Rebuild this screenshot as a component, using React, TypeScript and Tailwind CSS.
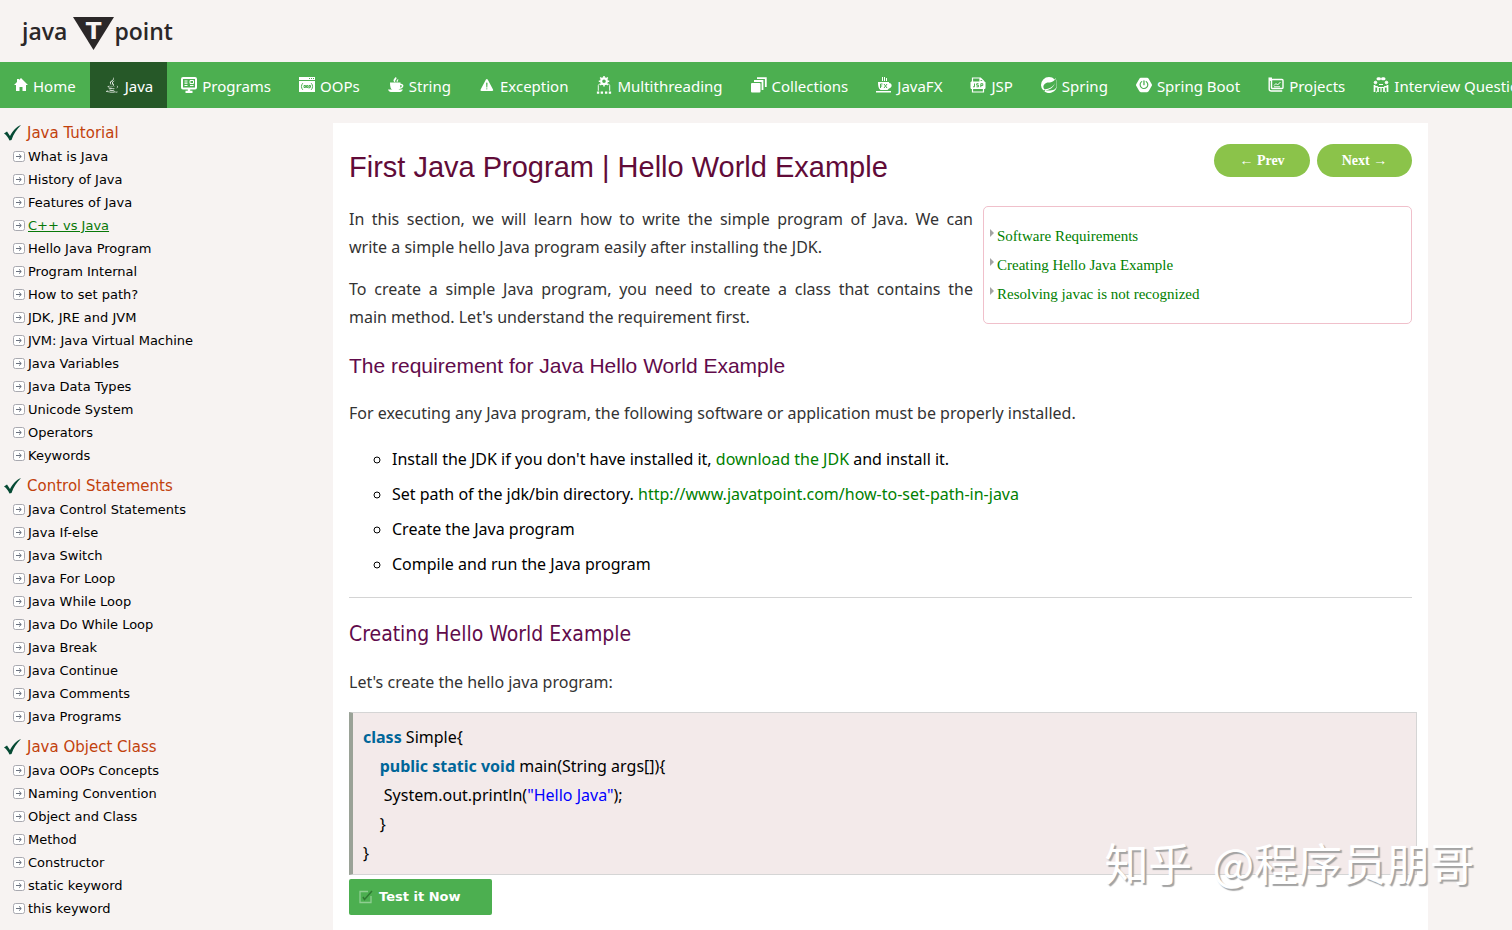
import type { ReactNode } from "react"
import { FaJava } from "react-icons/fa"
import { IoWarning } from "react-icons/io5"
import { SiSpring, SiSpringboot } from "react-icons/si"

const glyph = "h-4 w-4 shrink-0"

const HomeIcon = () => (
    <svg viewBox="0 0 14 14" className="h-3.5 w-3.5 shrink-0" fill="currentColor">
        <path d="M7 0l7 7h-2v6H8.5V9h-3v4H2V7H0l3-3V1h2v1z" />
    </svg>
)

const ProgramsIcon = () => (
    <svg viewBox="0 0 16 16" className={glyph} fill="none" stroke="currentColor">
        <rect x="1" y="1" width="14" height="10.5" rx="1" strokeWidth="2" />
        <path d="M3.5 4h3M3.5 6.2h3M3.5 8.5h3M9 8.5h3.5" strokeWidth="1.2" />
        <path d="M9 3.5h3.5v3H9z" />
        <path d="M8 12v2M4.5 15h7" strokeWidth="2.4" />
    </svg>
)

const OopsIcon = () => (
    <svg viewBox="0 0 16 16" className={glyph}>
        <path d="M0 0h16v3H0zM0 4h16v11H0z" fill="currentColor" />
        <path d="M10 1.5h1M12 1.5h1M14 1.5h1" stroke="#4caf50" />
        <path
            d="M3.8 6.2C2 8 2 11 3.8 12.8M12.2 6.2c1.8 1.8 1.8 4.8 0 6.6M5 8.5h1.6v2H5zM7.5 8.5h1.4v2H7.5zM10 11.5v-3h1.5v1.8H10"
            fill="none"
            stroke="#4caf50"
        />
    </svg>
)

const CupIcon = () => (
    <svg viewBox="0 0 16 16" className={glyph} fill="currentColor">
        <path d="M7.8 0c2.400 1.800-1.600 2.800-.4 5.400C4 4.200 5.800 2 7.800 0zM10 2c1.200 1-1.200 2 0 3.400-2.600-.8-1-2.400 0-3.400z" />
        <path d="M2 5.500h10.500v1.200c4-.5 4 5-1 5.300L10.500 13h-6C2.500 12 2 9.500 2 5.500zm10.400 2.400l-.3 2.600c2.200-.2 2-2.900.3-2.600z" />
        <path d="M0 12.500h15c-1.500 2.500-2.500 2.500-4 2.500H4c-1.500 0-3 0-4-2.500z" />
    </svg>
)

const ThreadIcon = () => (
    <svg viewBox="0 0 16 20" className="h-[19px] w-4 shrink-0" fill="none" stroke="currentColor">
        <circle cx="8" cy="5.5" r="3" strokeWidth="2.2" />
        <path d="M8 0v2M8 9v2M2.5 5.5h2M11.5 5.5h2M4 1.5L5.5 3M12 1.5L10.5 3M4 9.5L5.5 8M12 9.5L10.5 8" strokeWidth="1.6" />
        <path d="M3.5 8L2 10v5.5M12.5 8l1.5 2v5.5" />
        <path d="M.5 17.5H3M4.5 17.5H7M9 17.5h2.5M13 17.5h2.5" strokeWidth="2.6" />
    </svg>
)

const CollectionsIcon = () => (
    <svg viewBox="0 0 16 16" className={glyph} fill="none" stroke="currentColor">
        <rect x="0" y="6" width="9.5" height="9.5" rx="1" fill="currentColor" stroke="none" />
        <path d="M3 4h8.5v9M6 1.2h8.8V10" strokeWidth="1.8" />
    </svg>
)

const FxIcon = () => (
    <svg viewBox="0 0 16 16" className={glyph}>
        <path d="M6.5 0v4M8.5 0v4M10.5 1v3" stroke="currentColor" />
        <path d="M2 5h11v1c3.5 0 3.5 5 0 5.5L11.5 13h-7C2.5 11.5 2 9 2 5zM0 14h15v1.5H0z" fill="currentColor" />
        <path d="M4.5 11V7h2M4.5 9h1.7M8 7l3 4M11 7l-3 4" fill="none" stroke="#4caf50" />
    </svg>
)

const JspIcon = () => (
    <svg viewBox="0 0 16 16" className={glyph} fill="none" stroke="currentColor">
        <path d="M2.5 5V1h8l3 3v1M2.5 12v3h11v-3M10 1v3.5h3.5" strokeWidth="1.2" />
        <path d="M1 5h14v6.5H1z" fill="currentColor" />
        <path d="M4.5 6.5v3.3H3M8.5 6.7H6.7v1.5h1.8v1.6h-2M10.8 10.2V6.7h2v1.8h-2" stroke="#4caf50" />
    </svg>
)

const ProjectsIcon = () => (
    <svg viewBox="0 0 16 16" className={glyph} fill="none" stroke="currentColor">
        <rect x="3.5" y="2.5" width="11.5" height="9" rx="1" strokeWidth="1.4" />
        <path d="M1.2 4v8c0 1.5.5 2 2 2h11" strokeWidth="1.4" />
        <path d="M6 8.5l2-2L9.5 8l3-3M6 9.8h6" />
        <path d="M.5 2.2H4" strokeWidth="3.5" />
    </svg>
)

const InterviewIcon = () => (
    <svg viewBox="0 0 16 16" className={glyph} fill="none" stroke="currentColor">
        <path d="M5 1.7h1.5M9.5 1.7H11" strokeWidth="3" strokeLinecap="round" />
        <circle cx="2.5" cy="5.5" r="1.3" fill="currentColor" />
        <circle cx="13.5" cy="5.5" r="1.3" fill="currentColor" />
        <path d="M1.5 8v7M14.5 8v7M1.5 9.5L5 10M14.5 9.5L11 10M5 11v4M11 11v4" strokeWidth="1.7" />
        <path d="M4.5 10.5h7M8 11v4M6 7.5h4M3 15h1M12 15h1" strokeWidth="1.2" />
    </svg>
)

const tabs: { label: string; icon: ReactNode; active?: boolean }[] = [
    { label: "Home", icon: <HomeIcon /> },
    { label: "Java", icon: <FaJava className={glyph} />, active: true },
    { label: "Programs", icon: <ProgramsIcon /> },
    { label: "OOPs", icon: <OopsIcon /> },
    { label: "String", icon: <CupIcon /> },
    { label: "Exception", icon: <IoWarning className={glyph} /> },
    { label: "Multithreading", icon: <ThreadIcon /> },
    { label: "Collections", icon: <CollectionsIcon /> },
    { label: "JavaFX", icon: <FxIcon /> },
    { label: "JSP", icon: <JspIcon /> },
    { label: "Spring", icon: <SiSpring className={glyph} /> },
    { label: "Spring Boot", icon: <SiSpringboot className={glyph} /> },
    { label: "Projects", icon: <ProjectsIcon /> },
    { label: "Interview Questions", icon: <InterviewIcon /> },
]

const menu = [
    {
        title: "Java Tutorial",
        links: [
            "What is Java",
            "History of Java",
            "Features of Java",
            "C++ vs Java",
            "Hello Java Program",
            "Program Internal",
            "How to set path?",
            "JDK, JRE and JVM",
            "JVM: Java Virtual Machine",
            "Java Variables",
            "Java Data Types",
            "Unicode System",
            "Operators",
            "Keywords",
        ],
    },
    {
        title: "Control Statements",
        links: [
            "Java Control Statements",
            "Java If-else",
            "Java Switch",
            "Java For Loop",
            "Java While Loop",
            "Java Do While Loop",
            "Java Break",
            "Java Continue",
            "Java Comments",
            "Java Programs",
        ],
    },
    {
        title: "Java Object Class",
        links: [
            "Java OOPs Concepts",
            "Naming Convention",
            "Object and Class",
            "Method",
            "Constructor",
            "static keyword",
            "this keyword",
        ],
    },
]

const topics = ["Software Requirements", "Creating Hello Java Example", "Resolving javac is not recognized"]

function Logo() {
    return (
        <a href="#" className="flex items-center font-['Open_Sans',sans-serif] text-[23px] font-semibold text-[#2b2728]">
            <span>java</span>
            <svg viewBox="0 0 41 33" className="mt-1 ml-1.5 h-[33px] w-[41px] overflow-visible">
                <path d="M0 0h41L20.5 33z" fill="#2b2728" />
                <text x="20.5" y="22" textAnchor="middle" fontFamily="DejaVu Sans" fontSize="23" fontWeight="700" fill="#f7f3f2">T</text>
            </svg>
            <span>point</span>
        </a>
    )
}

function Sidebar() {
    return (
        <aside className="w-[333px] shrink-0 pt-1.5 font-['DejaVu_Sans',sans-serif] text-[13px] text-black">
            {menu.map((group) => (
                <section key={group.title}>
                    <h2 className="flex h-[31px] items-center gap-1.5 pt-2 pl-1 text-[15px] text-[#c2410c]">
                        <svg viewBox="0 0 17 17" className="h-[17px] w-[17px]">
                            <path d="M0 8.5l3-2L6 11C9 5.5 12 2 17 0 12.500 4.500 9.500 9 7.500 15l-2 .5C4 12.500 2.500 10 0 8.500z" fill="#064a34" />
                        </svg>
                        {group.title}
                    </h2>
                    <ul className="pl-[13px]">
                        {group.links.map((link) => (
                            <li key={link} className="flex h-[23px] items-center gap-[3px]">
                                <svg viewBox="0 0 12 12" className="h-3 w-3" fill="none">
                                    <rect x=".5" y=".5" width="11" height="10" rx="2" fill="#fff" stroke="#a9a9b0" />
                                    <path d="M3 5.5h5M6 3.3l2.3 2.2L6 7.700" stroke="#6b7280" />
                                </svg>
                                <a href="#" className={link === "C++ vs Java" ? "text-[#087808] underline" : ""}>
                                    {link}
                                </a>
                            </li>
                        ))}
                    </ul>
                </section>
            ))}
        </aside>
    )
}

const Keyword = ({ children }: { children: ReactNode }) => <b className="font-bold text-[#006699]">{children}</b>

export default function App() {
    return (
        <div className="relative flex min-h-screen flex-col overflow-hidden bg-[#f7f3f2] font-['Noto_Sans','Noto_Sans_CJK_SC',sans-serif]">
            <header className="flex h-[62px] items-center px-[22px]">
                <Logo />
            </header>

            <nav className="flex h-[46px] overflow-hidden bg-[#4caf50] font-['Noto_Sans',sans-serif] text-[15px] text-white">
                {tabs.map((tab) => (
                    <a
                        key={tab.label}
                        href="#"
                        className={`flex shrink-0 items-center gap-[5px] px-3.5 whitespace-nowrap ${tab.active ? "bg-[#265828]" : ""}`}
                    >
                        {tab.icon}
                        <span className="pt-0.5">{tab.label}</span>
                    </a>
                ))}
            </nav>

            <div className="flex flex-1 pr-[84px]">
                <Sidebar />

                <main className="mt-[15px] min-w-0 flex-1 bg-white px-4 pt-[21px] text-base text-[#333]">
                    <div className="flex items-start justify-between">
                        <h1 className="mt-1.5 font-['Liberation_Sans',sans-serif] text-[29px] leading-[34px] text-[#610b38]">
                            First Java Program | Hello World Example
                        </h1>
                        <div className="flex gap-[7px] font-['Liberation_Serif',serif] text-sm font-bold text-white">
                            <a href="#" className="flex h-[33px] w-24 items-center justify-center rounded-full bg-[#8bc34a]">← Prev</a>
                            <a href="#" className="flex h-[33px] w-[95px] items-center justify-center rounded-full bg-[#8bc34a]">Next →</a>
                        </div>
                    </div>

                    <div className="mt-[21px] flex items-start gap-2.5">
                        <div className="flex-1 space-y-3.5 text-justify leading-7">
                            <p>
                                In this section, we will learn how to write the simple program of Java. We can
                                write&nbsp;a simple hello Java program easily after installing the JDK.
                            </p>
                            <p>
                                To create a simple Java program, you need to create a class that contains the
                                main&nbsp;method. Let's understand the requirement first.
                            </p>
                        </div>
                        <ul className="mt-px h-[118px] w-[429px] rounded-[5px] border border-[#f0c0cb] pt-[15px] pl-1.5 font-['Liberation_Serif',serif] text-[15px] leading-[29px] text-[#008000]">
                            {topics.map((topic) => (
                                <li key={topic} className="flex gap-[3px]">
                                    <svg viewBox="0 0 4 8" className="mt-[7px] h-2 w-1" fill="#a3a3a3">
                                        <path d="M0 0l4 4-4 4z" />
                                    </svg>
                                    <a href="#">{topic}</a>
                                </li>
                            ))}
                        </ul>
                    </div>

                    <h2 className="mt-[21px] font-['Liberation_Sans',sans-serif] text-[21px] leading-7 text-[#610b4b]">
                        The requirement for Java Hello World Example
                    </h2>
                    <p className="mt-[19px] leading-7">
                        For executing any Java program, the following software or application must be properly installed.
                    </p>

                    <ul className="mt-[15px] list-[circle] pl-[43px] leading-[35px] text-black">
                        <li>
                            Install the JDK if you don't have installed it, <a href="#" className="text-[#008000]">download the JDK</a> and install it.
                        </li>
                        <li>
                            Set path of the jdk/bin directory. <a href="#" className="text-[#008000]">http://www.javatpoint.com/how-to-set-path-in-java</a>
                        </li>
                        <li>Create the Java program</li>
                        <li>Compile and run the Java program</li>
                    </ul>

                    <hr className="mt-[15px] border-[#d4d4d4]" />

                    <h2 className="mt-[22px] font-['DejaVu_Sans_Condensed','DejaVu_Sans',sans-serif] text-[21px] leading-7 text-[#610b4b]">
                        Creating Hello World Example
                    </h2>
                    <p className="mt-5 leading-7">Let's create the hello java program:</p>

                    <pre className="mt-4 -mr-[5px] border border-l-4 border-[#d5d5d5] border-l-[#9aa297] bg-[#f3eaea] pt-2.5 pb-1.5 pl-2.5 font-['Noto_Sans',sans-serif] leading-[29px] text-black">
                        <code className="font-['Noto_Sans',sans-serif]">
                            <Keyword>class</Keyword>{" Simple{\n"}
                            {"    "}<Keyword>public</Keyword> <Keyword>static</Keyword> <Keyword>void</Keyword>{" main(String args[]){\n"}
                            {"     System.out.println("}<span className="text-[#0000ff]">"Hello Java"</span>{");\n"}
                            {"    }\n}"}
                        </code>
                    </pre>
                    <button className="mt-1 flex h-9 w-[143px] items-center gap-1.5 rounded-xs bg-[#4caf50] pl-2.5 font-['DejaVu_Sans',sans-serif] text-[13px] font-bold text-white">
                        <svg viewBox="0 0 14 14" className="h-3.5 w-3.5" fill="none">
                            <path d="M9 1.5H1v11h11V6" stroke="#8fce91" strokeWidth="1.3" />
                            <path d="M4 7l1.5 2.5L13 1" stroke="#2f7a33" strokeWidth="1.5" />
                        </svg>
                        Test it Now
                    </button>
                </main>
            </div>

            {/* watermark floats over the page */}
            <div className="pointer-events-none absolute top-[832px] right-[38px] flex gap-5 text-[44px] leading-[60px] whitespace-nowrap text-white font-['Noto_Sans_CJK_SC',sans-serif] [text-shadow:2px_2px_1px_#a3a3a3]">
                <span>知乎</span>
                <span>@程序员朋哥</span>
            </div>
        </div>
    )
}
